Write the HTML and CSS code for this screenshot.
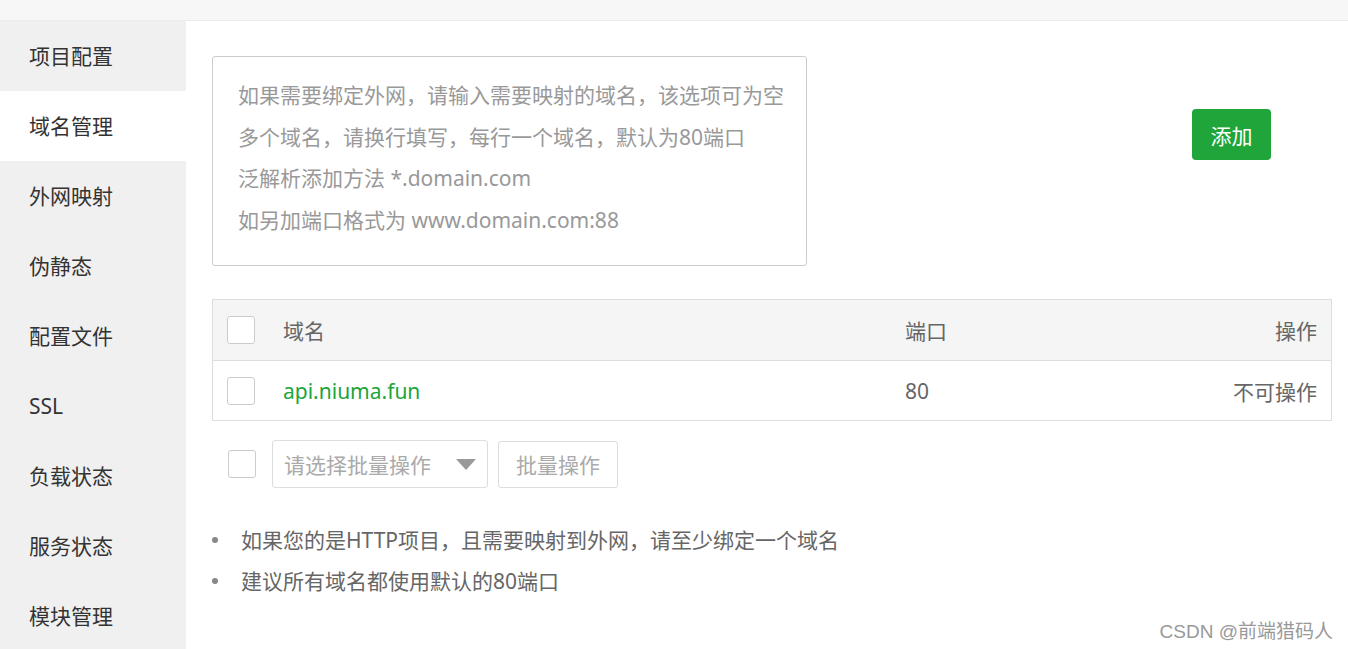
FILE: index.html
```html
<!DOCTYPE html>
<html lang="zh-CN">
<head>
<meta charset="utf-8">
<title>域名管理</title>
<link rel="stylesheet" href="styles.css">
</head>
<body>
<div class="topbar"></div>
<div class="layout">
  <nav class="sidebar">
    <div class="nav-item">项目配置</div>
    <div class="nav-item active">域名管理</div>
    <div class="nav-item">外网映射</div>
    <div class="nav-item">伪静态</div>
    <div class="nav-item">配置文件</div>
    <div class="nav-item">SSL</div>
    <div class="nav-item">负载状态</div>
    <div class="nav-item">服务状态</div>
    <div class="nav-item">模块管理</div>
  </nav>
  <main class="content">
    <div class="add-row">
      <textarea class="domain-input" placeholder="如果需要绑定外网，请输入需要映射的域名，该选项可为空&#10;多个域名，请换行填写，每行一个域名，默认为80端口&#10;泛解析添加方法 *.domain.com&#10;如另加端口格式为 www.domain.com:88"></textarea>
      <button class="btn-add">添加</button>
    </div>
    <div class="table">
      <div class="tr thead">
        <div class="td cell-check"><span class="checkbox"></span></div>
        <div class="td">域名</div>
        <div class="td">端口</div>
        <div class="td cell-op">操作</div>
      </div>
      <div class="tr">
        <div class="td cell-check"><span class="checkbox"></span></div>
        <div class="td domain">api.niuma.fun</div>
        <div class="td">80</div>
        <div class="td cell-op">不可操作</div>
      </div>
    </div>
    <div class="batch">
      <span class="checkbox"></span>
      <div class="select">
        <span>请选择批量操作</span>
        <span class="caret"></span>
      </div>
      <button class="btn-batch">批量操作</button>
    </div>
    <ul class="tips">
      <li>如果您的是HTTP项目，且需要映射到外网，请至少绑定一个域名</li>
      <li>建议所有域名都使用默认的80端口</li>
    </ul>
  </main>
</div>
<div class="watermark">CSDN @前端猎码人</div>
</body>
</html>
```

FILE: styles.css
```css
* { box-sizing: border-box; }

html, body {
  margin: 0;
  padding: 0;
  background: #fff;
  height: 100%;
  overflow: hidden;
}

body {
  font-family: "Noto Sans", "Noto Sans CJK SC", sans-serif;
  font-size: 21px;
  color: #333;
}

.topbar {
  height: 21px;
  background: #f7f7f7;
  border-bottom: 1px solid #ececec;
}

.layout {
  display: flex;
  height: calc(100% - 21px);
}

.sidebar {
  width: 186px;
  flex: none;
  background: #f0f0f0;
}

.nav-item {
  height: 70px;
  line-height: 70px;
  padding-left: 29px;
  color: #333;
  font-size: 21px;
}

.nav-item.active {
  background: #fff;
}

.content {
  flex: 1;
  padding: 35px 16px 0 26px;
}

.add-row {
  display: flex;
  align-items: flex-start;
}

.domain-input {
  width: 595px;
  height: 210px;
  border: 1px solid #ccc;
  border-radius: 3px;
  padding: 18px 8px 18px 25px;
  font-family: inherit;
  font-size: 21px;
  line-height: 41.67px;
  resize: none;
  outline: none;
  color: #333;
  overflow: hidden;
}

.domain-input::placeholder {
  color: #999;
}

.btn-add {
  margin-left: 385px;
  margin-top: 53px;
  width: 79px;
  height: 51px;
  background: #20a53a;
  color: #fff;
  border: none;
  border-radius: 4px;
  font-family: inherit;
  font-size: 21px;
  padding: 0;
}

.table {
  margin-top: 33px;
  width: 1120px;
  border: 1px solid #ddd;
}

.tr {
  display: grid;
  grid-template-columns: 70px 622px 1fr 200px;
  height: 60px;
  align-items: center;
  color: #666;
}

.tr + .tr {
  border-top: 1px solid #ddd;
}

.thead {
  background: #f5f5f5;
}

.cell-check {
  padding-left: 14px;
  display: flex;
  align-items: center;
}

.cell-op {
  text-align: right;
  padding-right: 14px;
}

.domain {
  color: #20a53a;
}

.checkbox {
  display: inline-block;
  width: 28px;
  height: 28px;
  border: 1px solid #ccc;
  border-radius: 3px;
  background: #fff;
}

.batch {
  margin-top: 19px;
  display: flex;
  align-items: center;
  padding-left: 16px;
}

.select {
  margin-left: 16px;
  width: 216px;
  height: 48px;
  border: 1px solid #ddd;
  border-radius: 3px;
  display: flex;
  align-items: center;
  justify-content: space-between;
  padding: 0 11px 0 11px;
  color: #aaa;
}

.caret {
  width: 0;
  height: 0;
  border-left: 10px solid transparent;
  border-right: 10px solid transparent;
  border-top: 11px solid #999;
}

.btn-batch {
  margin-left: 10px;
  width: 120px;
  height: 47px;
  background: #fff;
  border: 1px solid #ddd;
  border-radius: 3px;
  color: #aaa;
  font-family: inherit;
  font-size: 21px;
  padding: 0;
}

.tips {
  list-style: none;
  margin: 32px 0 0;
  padding: 0;
}

.tips li {
  position: relative;
  padding-left: 29px;
  line-height: 41px;
  color: #666;
}

.tips li::before {
  content: "";
  position: absolute;
  left: 0;
  top: 17px;
  width: 6px;
  height: 6px;
  border-radius: 50%;
  background: #888;
}

.watermark {
  position: absolute;
  right: 15px;
  bottom: 6px;
  font-family: "Liberation Sans", "Noto Sans CJK SC", sans-serif;
  font-size: 19px;
  color: #999;
}
```
